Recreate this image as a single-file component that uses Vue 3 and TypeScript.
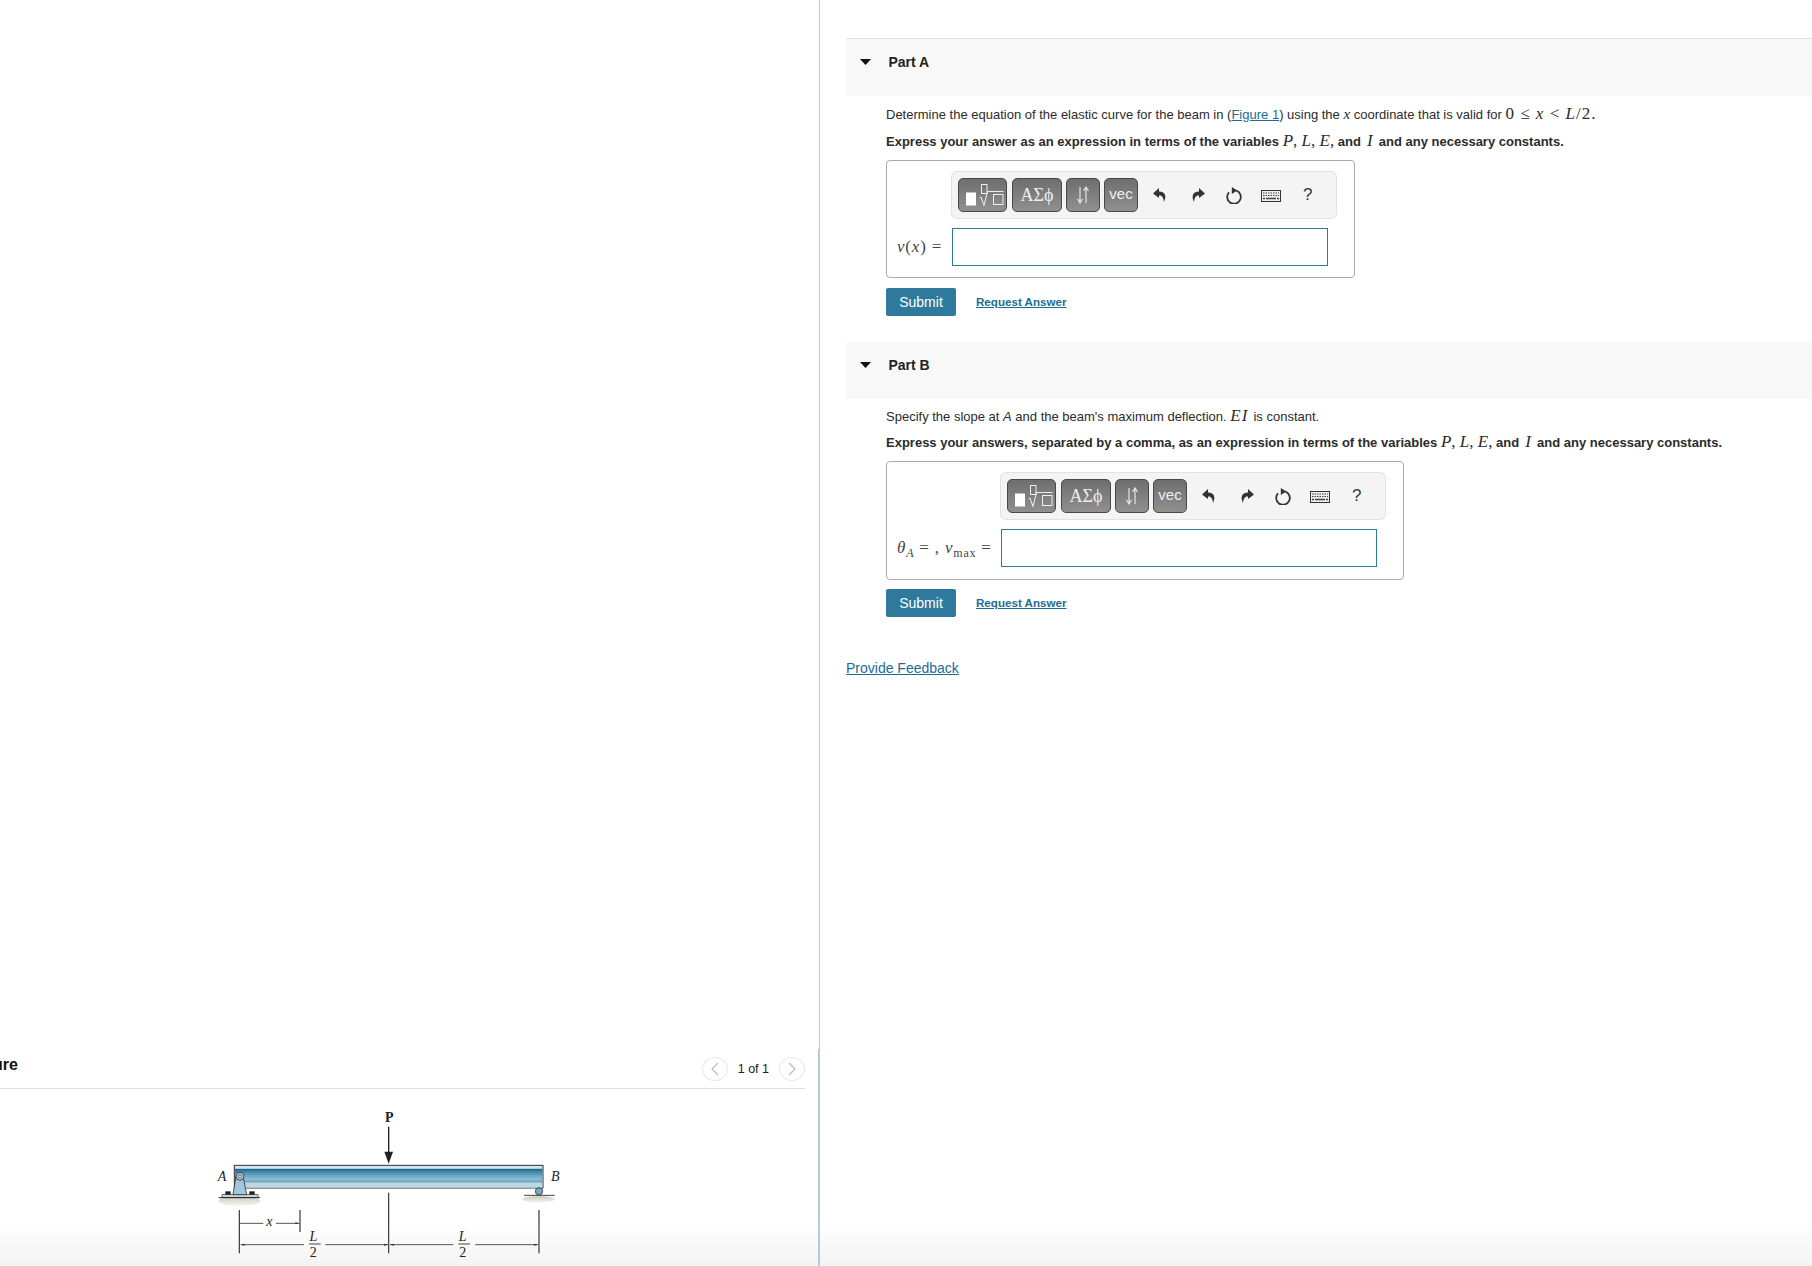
<script setup lang="ts">
interface Part { id: string; title: string }
const parts: Part[] = [
  { id: 'a', title: 'Part A' },
  { id: 'b', title: 'Part B' },
]
</script>

<template>
  <div class="page">
    <aside class="left">
      <div class="fig-head">
        <h2 class="fig-title">Figure</h2>
        <div class="pager">
          <button class="round"><svg width="10" height="14" viewBox="0 0 10 14"><path d="M8 1 2 7l6 6" fill="none" stroke="#bbb" stroke-width="1.2"/></svg></button>
          <span class="count">1 of 1</span>
          <button class="round"><svg width="10" height="14" viewBox="0 0 10 14"><path d="m2 1 6 6-6 6" fill="none" stroke="#bbb" stroke-width="1.2"/></svg></button>
        </div>
      </div>
      <svg class="beam" viewBox="0 0 1140 498" width="380" height="166">
        <defs>
          <linearGradient id="web" x1="0" y1="0" x2="0" y2="1">
            <stop offset="0" stop-color="#1f6f92"/><stop offset=".4" stop-color="#5f9fbd"/><stop offset=".75" stop-color="#8fbdd2"/><stop offset="1" stop-color="#5f9ab8"/>
          </linearGradient>
          <linearGradient id="ground" x1="0" y1="0" x2="0" y2="1">
            <stop offset="0" stop-color="#c9c9bd"/><stop offset="1" stop-color="#f6f6f2"/>
          </linearGradient>
        </defs>
        <text x="568" y="66" class="lbl-b" text-anchor="middle">P</text>
        <path d="M566 80V165" stroke="#222" stroke-width="4"/>
        <path d="M553 155h26l-13 36z" fill="#222"/>
        <rect x="103" y="196" width="926" height="68" fill="#d3e5ef" stroke="#333" stroke-width="3"/>
        <rect x="105" y="208" width="922" height="40" fill="url(#web)"/>
        <rect x="105" y="248" width="922" height="15" fill="#bcd8e5"/>
        <path d="M105 208h922" stroke="#1b5f7e" stroke-width="3"/>
        <text x="66" y="242" class="lbl-i" text-anchor="middle">A</text>
        <text x="1066" y="242" class="lbl-i" text-anchor="middle">B</text>
        <ellipse cx="118" cy="303" rx="62" ry="15" fill="url(#ground)"/>
        <rect x="66" y="284" width="108" height="8" fill="#c6d5d8" stroke="#333" stroke-width="2"/>
        <path d="M56 293h124" stroke="#222" stroke-width="3"/>
        <path d="M99 284l9-56h21l11 56z" fill="#a2c7da" stroke="#333" stroke-width="2.500"/>
        <circle cx="120" cy="229" r="12" fill="#a2c7da" stroke="#333" stroke-width="2.500"/>
        <circle cx="120" cy="229" r="4.500" fill="#eee" stroke="#333" stroke-width="2"/>
        <rect x="76" y="274" width="16" height="10" fill="#222"/>
        <rect x="148" y="274" width="16" height="10" fill="#222"/>
        <ellipse cx="1016" cy="298" rx="48" ry="10" fill="url(#ground)"/>
        <path d="M972 286h92" stroke="#444" stroke-width="3"/>
        <circle cx="1017" cy="274" r="11" fill="#74aac6" stroke="#333" stroke-width="2.500"/>
        <g stroke="#333" fill="none">
          <path d="M118 330V460M300 330v66M566 278V460M1017 330V460" stroke-width="3.500"/>
          <path d="M120 370h70M228 370h70M122 434h190M376 434h188M570 434h190M826 434h188" stroke-width="2.500"/>
        </g>
        <path d="M298 370l-12-3v6zM122 434l12-3v6zM564 434l-12-3v6zM570 434l12-3v6zM1014 434l-12-3v6z" fill="#333"/>
        <text x="208" y="379" class="lbl-i" text-anchor="middle">x</text>
        <text x="340" y="424" class="lbl-i" text-anchor="middle">L</text>
        <path d="M327 432h35M775 432h35" stroke="#222" stroke-width="2.500"/>
        <text x="340" y="470" class="lbl" text-anchor="middle">2</text>
        <text x="788" y="424" class="lbl-i" text-anchor="middle">L</text>
        <text x="788" y="470" class="lbl" text-anchor="middle">2</text>
      </svg>
      <div class="active-line"></div>
    </aside>

    <main class="right">
      <section v-for="part in parts" :key="part.id" class="part" :class="'part-' + part.id">
        <header class="part-head">
          <svg class="tri" width="11" height="6" viewBox="0 0 11 6"><path d="M0 0h11L5.500 6z" fill="#111"/></svg>
          <span>{{ part.title }}</span>
        </header>
        <div class="part-body">
          <p v-if="part.id === 'a'" class="q">Determine the equation of the elastic curve for the beam in (<a class="link">Figure 1</a>) using the <i class="m small">x</i> coordinate that is valid for <span class="m wide">0 ≤ <i>x</i> &lt; <i>L</i>/2.</span></p>
          <p v-else class="q">Specify the slope at <i>A</i> and the beam's maximum deflection. <i class="m wide ei">EI</i> is constant.</p>
          <p v-if="part.id === 'a'" class="q b">Express your answer as an expression in terms of the variables <span class="m"><i>P</i>, <i>L</i>, <i>E</i>,</span> and <i class="m vi">I</i> and any necessary constants.</p>
          <p v-else class="q b">Express your answers, separated by a comma, as an expression in terms of the variables <span class="m"><i>P</i>, <i>L</i>, <i>E</i>,</span> and <i class="m vi">I</i> and any necessary constants.</p>
          <div class="answer">
            <div class="label-col">
              <div v-if="part.id === 'a'" class="eq"><i>v</i>(<i>x</i>) =</div>
              <div v-else class="eq"><i>θ<sub>A</sub></i> = , <i>v</i><sub>max</sub> =</div>
            </div>
            <div class="tools-col">
              <div class="toolbar">
                <button class="tb w1">
                  <svg width="47" height="32" viewBox="0 0 47 32">
                    <rect x="7" y="13.500" width="10" height="13" fill="#fff"/>
                    <rect x="22.500" y="5.500" width="5.500" height="9" fill="none" stroke="#eee"/>
                    <path d="M20.500 19l1.500-1 3 8.500 3.500-14h16" fill="none" stroke="#eee"/>
                    <rect x="34.500" y="15.500" width="9.500" height="10" fill="none" stroke="#eee"/>
                  </svg>
                </button>
                <button class="tb w2">ΑΣϕ</button>
                <button class="tb w3">
                  <svg width="14" height="18" viewBox="0 0 14 18"><path d="M4 1v15M1.500 13 4 17l2.500-4M10 17V2M7.500 5 10 1l2.500 4" fill="none" stroke="#e4e4e4" stroke-width="1.200"/></svg>
                </button>
                <button class="tb w4">vec</button>
                <svg class="undo" width="14" height="14" viewBox="0 0 14 14"><path d="M6 0 0 5.500 6 10V7.500c3-.5 4.500 2 5 6.500 2.500-5 2-10.500-5-10.500z" fill="#333"/></svg>
                <svg class="redo" width="14" height="14" viewBox="0 0 14 14"><path d="M8 0l6 5.500L8 10V7.500c-3-.5-4.500 2-5 6.500C.5 9 1 3.500 8 3.500z" fill="#333"/></svg>
                <svg class="reset" width="16" height="17" viewBox="0 0 16 17"><path d="M3 5.300A6.800 6.800 0 1 0 10.500 3.600" fill="none" stroke="#333" stroke-width="1.800"/><path d="M5.800 0v7l5.500-3.500z" fill="#333"/></svg>
                <svg class="keys" width="20" height="12" viewBox="0 0 20 12"><rect x=".5" y=".5" width="19" height="11" fill="#eee" stroke="#333"/><path d="M2 3h16M2 5.500h16" stroke="#444" stroke-dasharray="1.500 1"/><path d="M2 8.500h2M5 8.500h10M16 8.500h2" stroke="#444" stroke-width="1.500"/></svg>
                <span class="help">?</span>
              </div>
              <div class="input"></div>
            </div>
          </div>
          <div class="actions"><button class="submit">Submit</button><a class="req">Request Answer</a></div>
        </div>
      </section>
      <a class="feedback">Provide Feedback</a>
    </main>
  </div>
</template>

<style>
html, body { margin: 0; padding: 0; background: #fff; }
</style>

<style scoped>
.page { display: flex; width: 1812px; height: 1266px; overflow: hidden; font-family: "Liberation Sans", Arial, sans-serif; color: #2b2b2b; background: linear-gradient(rgba(243,243,243,0), #f3f3f3) bottom / 100% 44px no-repeat; }
.left { position: relative; box-sizing: border-box; width: 820px; height: 1266px; flex: none; border-right: 1px solid #c8c8c8; padding-top: 1053px; }
.active-line { position: absolute; right: -1px; top: 1049px; bottom: 0; width: 2px; background: #b9c9dc; }
.fig-head { display: flex; justify-content: space-between; align-items: center; width: 805px; height: 35px; border-bottom: 1px solid #ddd; }
.fig-title { margin: 0 0 11px -31px; font-size: 16px; font-weight: 700; color: #111; }
.pager { display: flex; align-items: center; gap: 10px; margin-bottom: 3px; }
.round { display: flex; align-items: center; justify-content: center; box-sizing: border-box; width: 26px; height: 24px; padding: 0; background: #fff; border: 1px solid #e8e8e8; border-radius: 50%; }
.count { font-size: 12.500px; color: #222; }
.beam { display: block; margin: 11px 0 0 200px; }
.lbl, .lbl-i, .lbl-b { font-family: "Liberation Serif", serif; fill: #222; font-size: 42px; }
.lbl-i { font-style: italic; }
.lbl-b { font-weight: 700; }
.right { flex: 1; min-width: 0; padding: 38px 0 0 26px; }
.part-head { display: flex; align-items: flex-start; box-sizing: border-box; height: 58px; padding: 15px 0 0 14px; background: #f8f8f8; font-size: 14px; font-weight: 700; line-height: 17px; color: #222; }
.part-a .part-head { border-top: 1px solid #e2e2e2; }
.part-b .part-head { height: 57px; }
.tri { margin: 5px 17.500px 0 0; }
.part-body { padding-left: 40px; }
.part-a .part-body { padding-bottom: 26px; }
.q { margin: 0; font-size: 13px; line-height: 19px; white-space: nowrap; }
.part-a .q:first-child { padding-top: 9px; }
.part-b .q:first-child { padding-top: 8px; }
.q.b { font-weight: 700; }
.part-a .q.b { margin-top: 8px; }
.part-b .q.b { margin-top: 7px; }
.m { font-family: "Liberation Serif", serif; font-size: 17px; font-weight: 400; line-height: 0; }
.m.small { font-size: 15px; }
.m.wide { letter-spacing: 1px; }
.m.ei { margin-right: 1.500px; }
.m.vi { margin: 0 2.500px; }
.link { color: #1c6d93; text-decoration: underline; }
.answer { display: flex; box-sizing: border-box; width: fit-content; height: 118px; padding: 10px 17px 10px 10px; border: 1px solid #aaa; border-radius: 4px; background: #fff; }
.part-a .answer { margin-top: 9px; }
.part-b .answer { margin-top: 9px; height: 119px; }
.part-b .actions { margin-top: 9px; }
.label-col { display: flex; align-items: flex-end; height: 95px; }
.part-a .label-col { width: 54px; }
.part-b .label-col { width: 103px; }
.eq { height: 38px; font-family: "Liberation Serif", serif; font-size: 17px; line-height: 38px; letter-spacing: .8px; color: #444; white-space: nowrap; }
.eq sub { font-size: 12px; line-height: 0; }
.tools-col { display: flex; flex-direction: column; gap: 9px; }
.toolbar { display: flex; align-items: center; box-sizing: border-box; width: 386px; height: 48px; padding: 0 6px; border: 1px solid #e2e2e2; border-radius: 6px; background: #f4f4f4; }
.tb { display: flex; align-items: center; justify-content: center; flex: none; box-sizing: border-box; height: 34px; margin-right: 4px; padding: 0; border: 1px solid #484848; border-radius: 5px; background: linear-gradient(#6e6e6e, #909090); color: #eee; font-family: "Liberation Serif", serif; font-size: 18px; }
.w1 { width: 49px; margin-right: 5px; }
.w2 { width: 50px; }
.w3 { width: 34px; }
.w4 { width: 34px; padding-bottom: 3px; font-family: "Liberation Sans", sans-serif; font-size: 15px; }
.undo { flex: none; margin-left: 11px; }
.redo { flex: none; margin-left: 24px; }
.reset { flex: none; margin-left: 21px; }
.keys { flex: none; margin: 2px 0 0 19px; }
.help { margin-left: 22px; font-size: 17px; color: #333; }
.input { box-sizing: border-box; width: 376px; height: 38px; margin-left: 1px; border: 1px solid #2f7a9c; background: #fff; }
.actions { display: flex; align-items: center; gap: 20px; margin-top: 10px; }
.submit { box-sizing: border-box; width: 70px; height: 28px; padding: 0; border: 0; border-radius: 2px; background: #2f7a9c; color: #fff; font-family: inherit; font-size: 14px; }
.req { margin-bottom: 2px; font-size: 11.600px; font-weight: 700; color: #1c6d93; text-decoration: underline; }
.feedback { display: inline-block; margin-top: 43px; font-size: 14px; color: #1c6d93; text-decoration: underline; }
</style>
